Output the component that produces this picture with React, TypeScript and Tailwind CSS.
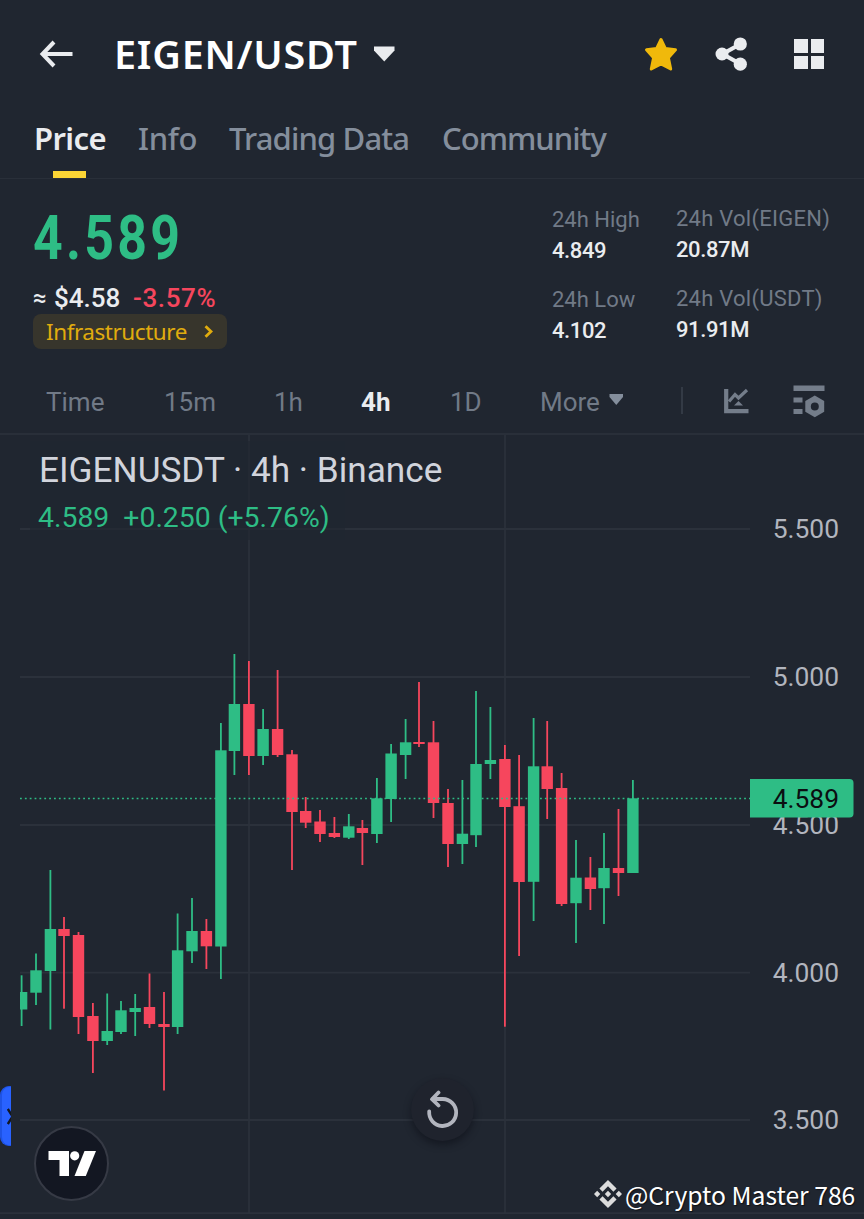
import { SiBinance } from "react-icons/si";

type Candle = {
  x: number;
  high: number;
  top: number;
  bottom: number;
  low: number;
  up: boolean;
};

const UP = "#2ebd85";
const DOWN = "#f6465d";
const GRID = "#2b313b";

const TABS = [
  { label: "Price", className: "w-[104px] text-[#eaecef] font-semibold tracking-[-0.6px]" },
  { label: "Info", className: "w-[91px] text-[#848e9c] font-medium tracking-[-0.3px]" },
  { label: "Trading Data", className: "w-[213px] text-[#848e9c] font-medium tracking-[-0.85px]" },
  { label: "Community", className: "text-[#848e9c] font-medium tracking-[-1px]" },
];

const STATS = [
  [
    { label: "24h High", value: "4.849" },
    { label: "24h Low", value: "4.102" },
  ],
  [
    { label: "24h Vol(EIGEN)", value: "20.87M" },
    { label: "24h Vol(USDT)", value: "91.91M" },
  ],
];

const INTERVALS = [
  { label: "Time", className: "w-[118px]" },
  { label: "15m", className: "w-[110px]" },
  { label: "1h", className: "w-[87px]" },
  { label: "4h", className: "w-[89px] font-bold text-[#eaecef]" },
  { label: "1D", className: "w-[90px]" },
];

const TICKS = [
  { label: "5.500", y: 529 },
  { label: "5.000", y: 677 },
  { label: "4.500", y: 825 },
  { label: "4.000", y: 972.7 },
  { label: "3.500", y: 1120 },
];

const c = (x: number, high: number, top: number, bottom: number, low: number, up: boolean): Candle => ({
  x,
  high,
  top,
  bottom,
  low,
  up,
});

const CANDLES: Candle[] = [
  c(21.6, 975.3, 992, 1009.5, 1026, true),
  c(36, 953.5, 970.3, 992.7, 1005, true),
  c(50.4, 870, 929, 971, 1029.5, true),
  c(64, 917, 929, 936, 1008.7, false),
  c(78.5, 932, 935, 1017, 1034, false),
  c(92.9, 1003, 1016, 1041, 1073, false),
  c(107.2, 993.5, 1031, 1041, 1045, true),
  c(121, 1001, 1010.3, 1032, 1034, true),
  c(135.2, 994, 1008, 1012, 1036, true),
  c(149.5, 973.5, 1007, 1024, 1028, false),
  c(164, 992, 1024, 1027, 1090.5, false),
  c(177.6, 913.5, 950.3, 1027, 1034, true),
  c(192, 898, 931, 951.3, 963, true),
  c(206.4, 919, 931, 946.3, 969, false),
  c(220.9, 723, 750.3, 946.5, 979, true),
  c(234.4, 654, 704, 751, 775, true),
  c(248.9, 661, 704, 756, 775, false),
  c(263.1, 709, 729, 756, 765, true),
  c(277.6, 670, 729, 755, 757, false),
  c(292, 750, 754.3, 812, 870, false),
  c(305.7, 797, 811, 822.7, 828, false),
  c(320, 810, 821.5, 834, 842, false),
  c(334.4, 817, 833, 837, 838, false),
  c(348.8, 814, 826.3, 837.7, 839, true),
  c(362.4, 820, 828, 833, 865, false),
  c(376.9, 778, 798.3, 834, 843, true),
  c(391.1, 744, 753.5, 799, 822, true),
  c(405.6, 719, 742.3, 755, 779, true),
  c(419, 682, 742, 744, 747, false),
  c(433.5, 721, 742.3, 803, 818, false),
  c(448, 789, 803, 844, 867, false),
  c(462.4, 780, 833.7, 844, 864, true),
  c(476, 691, 764, 835.2, 847, true),
  c(490.4, 707, 760, 764, 779, true),
  c(504.9, 745, 759, 807, 1026.7, false),
  c(519.1, 755, 806.2, 882, 956, false),
  c(533.6, 718, 766.3, 881.8, 921, true),
  c(547.2, 721, 766.3, 789, 819, false),
  c(561.6, 773, 788, 904, 906, false),
  c(576, 840, 877.7, 903.2, 943, true),
  c(590.4, 857, 877.5, 889, 910, false),
  c(604, 833, 868, 888.2, 924, true),
  c(618.5, 809, 868, 873, 896, false),
  c(632.9, 780, 798.3, 873, 873, true),
];

export default function App() {
  return (
    <div className="flex h-[1219px] w-[864px] flex-col overflow-hidden bg-[#202630] font-['Roboto',sans-serif] text-[#eaecef]">
      <Header />
      <Tabs />
      <Summary />
      <Intervals />
      <Chart />
    </div>
  );
}

function Header() {
  return (
    <div className="flex h-[108px] shrink-0 items-center pl-[39px]">
      <svg className="h-[28px] w-[34px]" viewBox="0 0 34 28" fill="none" stroke="#eaecef" strokeWidth={4}>
        <path d="M33.5 14H4" />
        <path d="M15 2L3.5 14L15 26" />
      </svg>
      <h1 className="ml-[41px] w-[260px] whitespace-nowrap pt-[2px] font-['Noto_Sans',sans-serif] text-[39.5px] font-semibold leading-none tracking-[0.8px] text-white">
        EIGEN/USDT
      </h1>
      <svg className="h-[16px] w-[21px]" viewBox="0 0 21 16">
        <path d="M0 0.5h20.5v4L10.25 15.5L0 4.5z" fill="#eaecef" />
      </svg>
      <svg className="ml-[249px] h-[35px] w-[34px]" viewBox="0 0 34 35">
        <path
          d="M17 2.5L21.3 11.4L31.5 12.8L24.4 20.7L26.7 32L17 27L7.3 32L9.6 20.7L2.5 12.8L12.7 11.4z"
          fill="#f0b90b"
          stroke="#f0b90b"
          strokeWidth={3}
          strokeLinejoin="round"
        />
      </svg>
      <svg className="ml-[37px] h-[34px] w-[33px]" viewBox="0 0 33 34">
        <path d="M25.5 7L7.5 17L25.5 27" fill="none" stroke="#eaecef" strokeWidth={4.2} />
        <circle cx={25.3} cy={7} r={6.6} fill="#eaecef" />
        <circle cx={7} cy={17} r={6.5} fill="#eaecef" />
        <circle cx={25.3} cy={27.2} r={6.6} fill="#eaecef" />
      </svg>
      <div className="ml-[46px] grid grid-cols-2 gap-[3px]">
        <span className="size-[13.5px] bg-[#eaecef]" />
        <span className="size-[13.5px] bg-[#eaecef]" />
        <span className="size-[13.5px] bg-[#eaecef]" />
        <span className="size-[13.5px] bg-[#eaecef]" />
      </div>
    </div>
  );
}

function Tabs() {
  return (
    <div className="flex h-[71px] shrink-0 border-b-[1.5px] border-[#292f39] pl-[34px] font-['Noto_Sans',sans-serif] text-[31px] leading-[60px]">
      {TABS.map((tab, i) => (
        <div key={tab.label} className={`flex flex-col whitespace-nowrap ${tab.className}`}>
          <span className="h-[63px]">{tab.label}</span>
          {i === 0 && <span className="ml-[19px] h-[7px] w-[33px] bg-[#fcd535]" />}
        </div>
      ))}
    </div>
  );
}

function Summary() {
  return (
    <div className="flex h-[189px] shrink-0 pl-[33px]">
      <div className="w-[519px] pt-[28px]">
        <div className="origin-left scale-x-[0.85] text-[61px] font-bold leading-[62px] tracking-[3.8px] text-[#2ebd85]">
          4.589
        </div>
        <div className="mt-[12px] flex h-[33px] items-center text-[26px] font-medium leading-[32px]">
          <span className="w-[21px] text-[24px]">≈</span>
          <span className="w-[79px]">$4.58</span>
          <span className="tracking-[0.6px] text-[#f6465d]">-3.57%</span>
        </div>
        <div className="flex h-[35px] w-[194px] items-center rounded-[8px] bg-[#37352c] pl-[13px] text-[#e0ac0e]">
          <span className="w-[158px] font-['Noto_Sans',sans-serif] text-[22.5px] leading-[32px] tracking-[-0.45px]">
            Infrastructure
          </span>
          <svg className="h-[13px] w-[9px]" viewBox="0 0 9 13" fill="none" stroke="currentColor" strokeWidth={2.8}>
            <path d="M1.5 1.2L7 6.5L1.5 11.8" />
          </svg>
        </div>
      </div>
      {STATS.map((column, i) => (
        <div key={i} className={i === 0 ? "w-[124px] pt-[25px]" : "pt-[24px] tracking-[0.25px]"}>
          {column.map((stat) => (
            <div key={stat.label} className="h-[80px] whitespace-nowrap text-[22px] leading-[31px]">
              <div className="text-[#717a87]">{stat.label}</div>
              <div className="font-medium tracking-[-0.4px]">{stat.value}</div>
            </div>
          ))}
        </div>
      ))}
    </div>
  );
}

function Intervals() {
  return (
    <div className="flex h-[67px] shrink-0 items-center border-b-2 border-[#292f39] pl-[46px] pt-[3px] text-[26px] text-[#717a87]">
      {INTERVALS.map((item) => (
        <span key={item.label} className={item.className}>
          {item.label}
        </span>
      ))}
      <span className="w-[69px]">More</span>
      <svg className="mb-[6px] h-[11px] w-[15px]" viewBox="0 0 15 11">
        <path d="M0.5 0h13.5v3L7.25 11L0.5 3z" fill="#848e9c" />
      </svg>
      <span className="mb-1 ml-[57px] h-[27px] w-[2px] bg-[#333a45]" />
      <svg className="mb-[3px] ml-[41px] h-[26px] w-[25px]" viewBox="0 0 25 26" fill="none" stroke="#747d8a">
        <path d="M2.2 1V23.2H24.5" strokeWidth={4.2} />
        <path d="M5 13.5L11 6.5L14.5 10L23 2" strokeWidth={3.2} />
        <path d="M10 17.5h9L14.5 13z" fill="#747d8a" stroke="none" />
      </svg>
      <svg className="mb-[3px] ml-[44px] h-[34px] w-[32px]" viewBox="0 0 32 34" fill="#747d8a">
        <path d="M0.5 1.5h31v5.5h-31zM0.5 13.5h9v5h-9zM0.5 25h9v5h-9z" />
        <path d="M21.8 11.5L31.2 17V27.8L21.8 33.3L12.3 27.8V17zM21.8 18.5a4 4 0 100 8 4 4 0 000-8z" fillRule="evenodd" />
      </svg>
    </div>
  );
}

function Chart() {
  return (
    <div className="relative h-[784px] shrink-0">
      <svg className="block h-[784px] w-[864px]" viewBox="0 435 864 784">
        <g stroke={GRID} strokeWidth={1.8}>
          <path d="M249 435V1213M505 435V1213M0 1213.2H864" />
          {TICKS.map((tick) => (
            <path key={tick.label} d={`M20 ${tick.y}H750`} />
          ))}
        </g>

        {/* Legend backdrop fades the grid behind the text */}
        <rect x={30} y={441} width={315} height={99} fill="#202630" opacity={0.6} />

        <clipPath id="plot">
          <rect x={20} y={435} width={730} height={778} />
        </clipPath>
        <g clipPath="url(#plot)">
          {CANDLES.filter((d) => !d.up).map((d) => (
            <CandleShape key={d.x} candle={d} />
          ))}
          <path d="M20 798.4H750" stroke={UP} strokeWidth={1.5} strokeDasharray="1.8 3.06" />
          {CANDLES.filter((d) => d.up).map((d) => (
            <CandleShape key={d.x} candle={d} />
          ))}
        </g>

        <g fill="#b2b5be" fontSize={26.4} fontFamily="Roboto, sans-serif" textAnchor="end">
          {TICKS.map((tick) => (
            <text key={tick.label} x={839} y={tick.y + 9.4}>
              {tick.label}
            </text>
          ))}
        </g>
        <path d="M750 779H849.5a4 4 0 014 4V813.5a4 4 0 01-4 4H750z" fill={UP} />
        <text x={839} y={808} fill="#0b0e11" fontSize={26.4} fontFamily="Roboto, sans-serif" textAnchor="end">
          4.589
        </text>
      </svg>

      <div className="absolute left-[38px] top-[14px] whitespace-nowrap">
        <div className="ml-px text-[35.2px] leading-[42px] text-[#d1d4dc]">EIGENUSDT · 4h · Binance</div>
        <div className="mt-[9px] flex gap-[14px] text-[28.4px] leading-[35px] text-[#2ebd85]">
          <span>4.589</span>
          <span>+0.250 (+5.76%)</span>
        </div>
      </div>

      {/* Drawer handle */}
      <div className="absolute left-0 top-[651px] h-[60px] w-[11px] overflow-hidden rounded-l-[9px] border-y border-l-2 border-[#1e53e5] bg-[#2962ff]">
        <svg className="ml-[5px] mt-[21px] h-[17px] w-[9px]" viewBox="0 0 9 17" fill="none" stroke="#131722" strokeWidth={2.4}>
          <path d="M0.8 1L5.5 8.5L0.8 16" />
        </svg>
      </div>

      {/* Brand mark */}
      <div className="absolute left-[34px] top-[691px] flex size-[75px] items-center justify-center rounded-full border-[2.5px] border-[#363a45] bg-[#131722]">
        <svg className="h-[25px] w-[48px]" viewBox="0 0 48 25" fill="#fff">
          <path d="M0.5 0H21V25H11.5V9H0.5z" />
          <circle cx={26.7} cy={4.8} r={4.6} />
          <path d="M36.5 0H48L37.8 25H26.5z" />
        </svg>
      </div>

      <div className="absolute left-[411px] top-[643px] flex size-[63px] items-center justify-center rounded-full bg-[#1f232d] shadow-[0_4px_7px_rgba(10,12,20,0.5)]">
        <svg
          className="h-[39px] w-[33px]"
          viewBox="426 1090 33 39"
          fill="none"
          stroke="#b2b5be"
          strokeWidth={3.8}
          strokeLinecap="round"
          strokeLinejoin="round"
        >
          <path d="M429.2 1111.5A13.5 13.5 0 10442.7 1099H433" />
          <path d="M438.5 1092.5L432 1099.2L438.5 1105.5" />
        </svg>
      </div>

      <div className="absolute left-[594px] top-[741px] flex items-center gap-[3px] whitespace-nowrap font-['Noto_Sans_CJK_SC',sans-serif] text-[24.7px] leading-[36px] text-white [text-shadow:1px_1px_1px_rgba(0,0,0,0.6)]">
        <SiBinance className="size-[28px] text-[#dcdcdc]" />
        <span>@Crypto Master 786</span>
      </div>
    </div>
  );
}

function CandleShape({ candle }: { candle: Candle }) {
  return (
    <g fill={candle.up ? UP : DOWN}>
      <rect x={candle.x - 0.9} y={candle.high} width={1.8} height={candle.low - candle.high} />
      <rect x={candle.x - 5.7} y={candle.top} width={11.4} height={candle.bottom - candle.top} />
    </g>
  );
}
